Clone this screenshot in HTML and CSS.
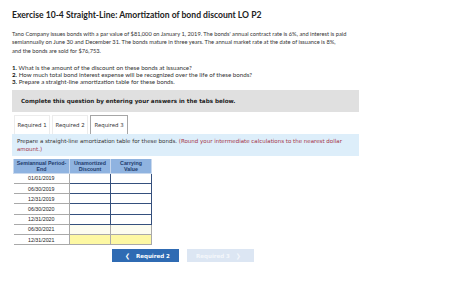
FILE: index.html
```html
<!DOCTYPE html>
<html lang="en">
<head>
    <meta charset="UTF-8">
    <meta name="viewport" content="width=device-width, initial-scale=1.0">
    <title>Exercise 10-4 Straight-Line</title>
    <link rel="stylesheet" href="styles.css">
</head>
<body>

    <div class="page">
        <h1>Exercise 10-4 Straight-Line: Amortization of bond discount LO P2</h1>
        <p class="intro">Tano Company issues bonds with a par value of $81,000 on January 1, 2019. The bonds' annual contract rate is 6%, and interest is paid<br>
        semiannually on June 30 and December 31. The bonds mature in three years. The annual market rate at the date of issuance is 8%,<br>
        and the bonds are sold for $76,753.</p>

        <ol class="questions">
            <li><b>1.</b> What is the amount of the discount on these bonds at issuance?</li>
            <li><b>2.</b> How much total bond interest expense will be recognized over the life of these bonds?</li>
            <li><b>3.</b> Prepare a straight-line amortization table for these bonds.</li>
        </ol>

        <div class="notice">Complete this question by entering your answers in the tabs below.</div>

        <div class="tabs">
            <span class="tab">Required 1</span>
            <span class="tab">Required 2</span>
            <span class="tab active">Required 3</span>
        </div>

        <div class="info">
            <div>Prepare a straight-line amortization table for these bonds. <span class="hint">(Round your intermediate calculations to the nearest dollar</span></div>
            <div class="hint">amount.)</div>
        </div>

        <table class="amort">
            <thead>
                <tr>
                    <th class="c1">Semiannual Period-<br>End</th>
                    <th class="c2">Unamortized<br>Discount</th>
                    <th class="c3">Carrying<br>Value</th>
                </tr>
            </thead>
            <tbody>
                <tr><td>01/01/2019</td><td class="inp"></td><td class="inp"></td></tr>
                <tr><td>06/30/2019</td><td class="inp"></td><td class="inp"></td></tr>
                <tr><td>12/31/2019</td><td class="inp"></td><td class="inp"></td></tr>
                <tr><td>06/30/2020</td><td class="inp"></td><td class="inp"></td></tr>
                <tr><td>12/31/2020</td><td class="inp"></td><td class="inp"></td></tr>
                <tr><td>06/30/2021</td><td class="pale"></td><td class="pale"></td></tr>
                <tr><td>12/31/2021</td><td class="yellow"></td><td class="yellow"></td></tr>
            </tbody>
        </table>

        <div class="nav">
            <button class="btn prev"><span class="arrow">&#x276E;</span> Required 2</button>
            <button class="btn next">Required 3 <span class="arrow">&#x276F;</span></button>
        </div>
    </div>

</body>
</html>
```

FILE: styles.css
```css
/* Estilo geral */
body {
    margin: 0;
    background: #ffffff;
    font-family: "Lato", "Open Sans", sans-serif;
    color: #333;
}

.page {
    padding: 9px 0 0 12px;
    width: 347px;
}

h1 {
    font-size: 8.6px;
    line-height: 12px;
    margin: 0 0 9px;
    color: #222;
    white-space: nowrap;
}

.intro {
    font-size: 5.7px;
    line-height: 8.3px;
    margin: 0 0 9px;
    white-space: nowrap;
}

.questions {
    list-style: none;
    padding: 0;
    margin: 0 0 4px;
    font-size: 6.2px;
    line-height: 7.3px;
}

.questions b {
    color: #111;
}

/* Caixa cinza */
.notice {
    background: #e0e0e0;
    height: 22px;
    line-height: 22px;
    padding-left: 9px;
    font-family: "DejaVu Sans", Verdana, sans-serif;
    font-weight: bold;
    font-size: 5.6px;
    color: #222;
    margin-bottom: 3px;
}

/* Abas */
.tabs {
    display: flex;
    gap: 2px;
    padding-left: 2px;
    height: 19px;
}

.tab {
    box-sizing: border-box;
    width: 36px;
    height: 19px;
    line-height: 18px;
    text-align: center;
    font-family: "DejaVu Sans", Verdana, sans-serif;
    font-size: 5.4px;
    color: #333;
    border: 1px solid #ececec;
    border-bottom: none;
}

.tab.active {
    width: 38px;
    border-color: #a6a6a6;
    background: #fff;
}

/* Caixa azul */
.info {
    background: #ddeefa;
    height: 22px;
    box-sizing: border-box;
    padding: 3px 5px 0;
    font-family: "DejaVu Sans", Verdana, sans-serif;
    font-size: 5.5px;
    line-height: 8.5px;
    color: #333;
}

.hint {
    color: #a33448;
}

/* Tabela */
.amort {
    border-collapse: collapse;
    margin: 3px 0 0 1px;
    font-family: "Liberation Sans", Arial, sans-serif;
    font-size: 5.3px;
    table-layout: fixed;
    width: 135px;
}

.amort th {
    background: #8fb3e0;
    color: #1d3a6b;
    font-weight: bold;
    height: 14px;
    line-height: 6px;
    padding: 0;
    border: 1px solid #c9d9ee;
    border-top: none;
}

.amort .c1 { width: 55px; }
.amort .c2 { width: 40px; }
.amort .c3 { width: 40px; }

.amort td {
    height: 9.2px;
    padding: 0;
    text-align: center;
    color: #222;
    border: 1px solid #a9a9a9;
    border-left: none;
}

.amort td.inp {
    border: 1px solid #35507d;
    background: #fff;
}

.amort td.pale {
    background: #fcfcef;
    border-color: #a9a9a9;
}

.amort td.yellow {
    background: #fdf8a3;
    border-color: #a9a9a9;
}

/* Botoes */
.nav {
    display: flex;
    gap: 8px;
    padding-left: 100px;
    margin-top: 4px;
}

.btn {
    width: 67px;
    height: 13px;
    border: none;
    padding: 0;
    font-family: "DejaVu Sans", Verdana, sans-serif;
    font-weight: bold;
    font-size: 5.5px;
    color: #fff;
}

.btn.prev {
    background: #2f6bb3;
}

.btn.next {
    background: #dce6f3;
    color: #f4f7fb;
}

.arrow {
    font-size: 6px;
    margin: 0 4px;
}
```
